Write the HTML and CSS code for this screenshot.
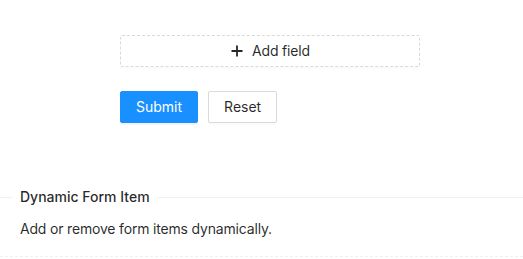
FILE: index.html
```html
<!DOCTYPE html>
<html>
<head>
<meta charset="utf-8">
<link rel="stylesheet" href="styles.css">
</head>
<body>
<section class="code-box">
  <div class="demo">
    <div class="form-item">
      <button class="btn-dashed" type="button">
        <svg class="plus" viewBox="0 0 14 14" width="14" height="14" aria-hidden="true">
          <path d="M7 1.5v11M1.5 7h11" stroke="currentColor" stroke-width="1.8" fill="none"/>
        </svg>
        <span>Add field</span>
      </button>
    </div>
    <div class="form-item actions">
      <button class="btn btn-primary" type="submit">Submit</button>
      <button class="btn btn-default" type="button">Reset</button>
    </div>
  </div>
  <div class="meta">
    <div class="meta-title">Dynamic Form Item</div>
    <p class="meta-desc">Add or remove form items dynamically.</p>
  </div>
</section>
</body>
</html>
```

FILE: styles.css
```css
html, body {
  margin: 0;
  padding: 0;
  background: #fff;
}
body {
  font-family: Inter, "Noto Sans", "Liberation Sans", sans-serif;
  font-size: 14px;
  line-height: 22px;
  color: rgba(0, 0, 0, 0.85);
}
.code-box {
  width: 523px;
}
.demo {
  padding: 35px 0 50px 120px;
}
.form-item {
  margin-bottom: 24px;
}
.btn-dashed {
  width: 300px;
  height: 32px;
  display: flex;
  align-items: center;
  justify-content: center;
  gap: 8px;
  border: 1px dashed #d9d9d9;
  border-radius: 2px;
  background: #fff;
  font: inherit;
  letter-spacing: -0.18px;
  color: rgba(0, 0, 0, 0.85);
  padding: 0 15px;
  box-shadow: 0 2px 0 rgba(0, 0, 0, 0.015);
}
.plus {
  display: block;
}
.actions {
  display: flex;
  gap: 10px;
}
.btn {
  height: 32px;
  padding: 4px 15px;
  border-radius: 2px;
  font: inherit;
  border: 1px solid transparent;
}
.btn-primary {
  background: #1890ff;
  border-color: #1890ff;
  color: #fff;
  box-shadow: 0 2px 0 rgba(0, 0, 0, 0.045);
}
.btn-default {
  background: #fff;
  border-color: #d9d9d9;
  color: rgba(0, 0, 0, 0.85);
  box-shadow: 0 2px 0 rgba(0, 0, 0, 0.015);
}
.meta {
  position: relative;
  border-top: 1px solid #f0f0f0;
  border-bottom: 1px dashed #f0f0f0;
  padding: 20px 20px 16px;
}
.meta-title {
  position: absolute;
  top: -12px;
  left: 12px;
  padding: 0 8px;
  background: #fff;
  font-weight: 500;
}
.meta-desc {
  margin: 0;
  letter-spacing: -0.18px;
}
```
